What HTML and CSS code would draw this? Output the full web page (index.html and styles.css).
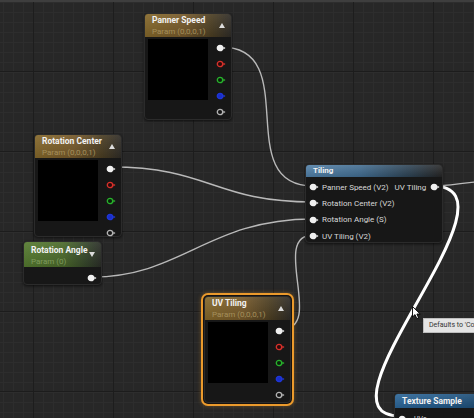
FILE: index.html
```html
<!DOCTYPE html>
<html lang="en">
<head>
  <meta charset="UTF-8">
  <meta name="viewport" content="width=device-width, initial-scale=1.0">
  <link rel="stylesheet" href="styles.css">
  <title>Material Graph</title>
</head>
<body>
  <div class="graph">
    <!-- wires sit under the nodes -->
    <svg class="wires" width="474" height="418" viewBox="0 0 474 418">
      <path class="wire" d="M221,47 C304,47 230,186 313,186" />
      <path class="wire" d="M111,167 C210,167 214,202 313,202" />
      <path class="wire" d="M92,277 C182,277 208,219 313,219" />
      <path class="wire" d="M282,329 C325,329 270,235 313,235" />
      <path class="wire" d="M432,186 C450,186 460,183 476,182" />
      <path class="wire active" d="M432,186 C532,186 305,416 400,416" />
    </svg>

    <div class="node param panner">
      <div class="node-head gold">
        <div class="titles">
          <div class="title">Panner Speed</div>
          <div class="sub">Param (0,0,0,1)</div>
        </div>
        <span class="tri-up"></span>
      </div>
      <div class="param-body">
        <div class="preview"></div>
        <div class="pins">
          <svg class="pin pin-w" width="10" height="8"><circle cx="4" cy="4" r="2.7"/><polygon points="7.3,2.4 9.5,4 7.3,5.6"/></svg>
          <svg class="pin pin-r" width="10" height="8"><circle cx="4" cy="4" r="2.7"/><polygon points="7.3,2.4 9.5,4 7.3,5.6"/></svg>
          <svg class="pin pin-g" width="10" height="8"><circle cx="4" cy="4" r="2.7"/><polygon points="7.3,2.4 9.5,4 7.3,5.6"/></svg>
          <svg class="pin pin-b" width="10" height="8"><circle cx="4" cy="4" r="2.7"/><polygon points="7.3,2.4 9.5,4 7.3,5.6"/></svg>
          <svg class="pin pin-a" width="10" height="8"><circle cx="4" cy="4" r="2.7"/><polygon points="7.3,2.4 9.5,4 7.3,5.6"/></svg>
        </div>
      </div>
    </div>

    <div class="node param rot-center">
      <div class="node-head gold">
        <div class="titles">
          <div class="title">Rotation Center</div>
          <div class="sub">Param (0,0,0,1)</div>
        </div>
        <span class="tri-up"></span>
      </div>
      <div class="param-body">
        <div class="preview"></div>
        <div class="pins">
          <svg class="pin pin-w" width="10" height="8"><circle cx="4" cy="4" r="2.7"/><polygon points="7.3,2.4 9.5,4 7.3,5.6"/></svg>
          <svg class="pin pin-r" width="10" height="8"><circle cx="4" cy="4" r="2.7"/><polygon points="7.3,2.4 9.5,4 7.3,5.6"/></svg>
          <svg class="pin pin-g" width="10" height="8"><circle cx="4" cy="4" r="2.7"/><polygon points="7.3,2.4 9.5,4 7.3,5.6"/></svg>
          <svg class="pin pin-b" width="10" height="8"><circle cx="4" cy="4" r="2.7"/><polygon points="7.3,2.4 9.5,4 7.3,5.6"/></svg>
          <svg class="pin pin-a" width="10" height="8"><circle cx="4" cy="4" r="2.7"/><polygon points="7.3,2.4 9.5,4 7.3,5.6"/></svg>
        </div>
      </div>
    </div>

    <div class="node rot-angle">
      <div class="node-head green">
        <div class="titles">
          <div class="title">Rotation Angle</div>
          <div class="sub">Param (0)</div>
        </div>
        <span class="tri-down"></span>
      </div>
      <div class="angle-body">
        <svg class="pin pin-w" width="10" height="8"><circle cx="4" cy="4" r="2.7"/><polygon points="7.3,2.4 9.5,4 7.3,5.6"/></svg>
      </div>
    </div>

    <div class="node tiling">
      <div class="tiling-head">Tiling</div>
      <div class="tiling-body">
        <div class="inputs">
          <div class="row"><svg class="pin pin-w" width="10" height="8"><circle cx="4" cy="4" r="2.7"/><polygon points="7.3,2.4 9.5,4 7.3,5.6"/></svg><span>Panner Speed (V2)</span></div>
          <div class="row"><svg class="pin pin-w" width="10" height="8"><circle cx="4" cy="4" r="2.7"/><polygon points="7.3,2.4 9.5,4 7.3,5.6"/></svg><span>Rotation Center (V2)</span></div>
          <div class="row"><svg class="pin pin-w" width="10" height="8"><circle cx="4" cy="4" r="2.7"/><polygon points="7.3,2.4 9.5,4 7.3,5.6"/></svg><span>Rotation Angle (S)</span></div>
          <div class="row"><svg class="pin pin-w" width="10" height="8"><circle cx="4" cy="4" r="2.7"/><polygon points="7.3,2.4 9.5,4 7.3,5.6"/></svg><span>UV Tiling (V2)</span></div>
        </div>
        <div class="outputs">
          <div class="row"><span>UV Tiling</span><svg class="pin pin-w" width="10" height="8"><circle cx="4" cy="4" r="2.7"/><polygon points="7.3,2.4 9.5,4 7.3,5.6"/></svg></div>
        </div>
      </div>
    </div>

    <div class="node param uv-tiling selected">
      <div class="node-head gold">
        <div class="titles">
          <div class="title">UV Tiling</div>
          <div class="sub">Param (0,0,0,1)</div>
        </div>
        <span class="tri-up"></span>
      </div>
      <div class="param-body">
        <div class="preview"></div>
        <div class="pins">
          <svg class="pin pin-w" width="10" height="8"><circle cx="4" cy="4" r="2.7"/><polygon points="7.3,2.4 9.5,4 7.3,5.6"/></svg>
          <svg class="pin pin-r" width="10" height="8"><circle cx="4" cy="4" r="2.7"/><polygon points="7.3,2.4 9.5,4 7.3,5.6"/></svg>
          <svg class="pin pin-g" width="10" height="8"><circle cx="4" cy="4" r="2.7"/><polygon points="7.3,2.4 9.5,4 7.3,5.6"/></svg>
          <svg class="pin pin-b" width="10" height="8"><circle cx="4" cy="4" r="2.7"/><polygon points="7.3,2.4 9.5,4 7.3,5.6"/></svg>
          <svg class="pin pin-a" width="10" height="8"><circle cx="4" cy="4" r="2.7"/><polygon points="7.3,2.4 9.5,4 7.3,5.6"/></svg>
        </div>
      </div>
    </div>

    <div class="node texture">
      <div class="texture-head">
        <span>Texture Sample</span>
        <span class="tri-up"></span>
      </div>
      <div class="texture-body">
        <div class="row"><svg class="pin pin-w" width="10" height="8"><circle cx="4" cy="4" r="2.7"/><polygon points="7.3,2.4 9.5,4 7.3,5.6"/></svg><span>UVs</span></div>
      </div>
    </div>

    <div class="tooltip">Defaults to 'Coordinates'</div>

    <svg class="cursor" width="10" height="14" viewBox="0 0 10 14">
      <path d="M0.5,0.5 L0.5,11 L3,8.6 L4.8,12.6 L6.6,11.8 L4.9,8 L8.2,8 Z" />
    </svg>
  </div>
</body>
</html>
```

FILE: styles.css
```css
/* Reset */
html, body {
  margin: 0;
  padding: 0;
  overflow: hidden;
  background: #262626;
}

body {
  font-family: Roboto, "Liberation Sans", sans-serif;
}

/* Canvas with grid */
.graph {
  position: relative;
  width: 474px;
  height: 418px;
  overflow: hidden;
  background-color: #272727;
  background-image:
    linear-gradient(#1c1c1c 1px, transparent 1px),
    linear-gradient(90deg, #1d1d1d 1px, transparent 1px),
    linear-gradient(#2d2d2d 1px, transparent 1px),
    linear-gradient(90deg, #2d2d2d 1px, transparent 1px);
  background-size: 80px 80px, 80px 80px, 10px 10px, 10px 10px;
  background-position: 0 71px, 33px 0, 0 2px, 3px 0;
  box-shadow: inset 0 2px 0 #3e3e3e;
}

.wires {
  position: absolute;
  left: 0;
  top: 0;
}

.wire {
  fill: none;
  stroke: #b9b9b9;
  stroke-width: 1.4;
}

.wire.active {
  stroke: #ffffff;
  stroke-width: 3;
}

/* Nodes */
.node {
  position: absolute;
  box-sizing: border-box;
  background: #171717;
  border: 1px solid #2b2b2b;
  border-radius: 4px;
  box-shadow: 0 1px 3px rgba(0, 0, 0, 0.6);
}

.param {
  width: 88px;
  height: 107px;
}

.panner { left: 144px; top: 13px; }
.rot-center { left: 34px; top: 134px; height: 103px; }
.uv-tiling { left: 204px; top: 296px; width: 87px; }
.rot-angle { left: 23px; top: 241px; width: 79px; height: 44px; }
.tiling { left: 305px; top: 164px; width: 138px; height: 79px; }
.texture { left: 394px; top: 393px; width: 100px; height: 40px; }

.selected {
  box-shadow: 0 0 0 1px #171310, 0 0 0 3px #eb9a2c, 0 0 4px 3px rgba(235, 154, 44, 0.35);
}

.node-head {
  height: 23px;
  display: flex;
  justify-content: space-between;
  align-items: flex-start;
  box-sizing: border-box;
  padding: 1px 6px 0 7px;
  border-radius: 3px 3px 0 0;
}

.gold {
  background:
    linear-gradient(rgba(255, 255, 255, 0.08), rgba(0, 0, 0, 0.12)),
    linear-gradient(90deg, #85682a 0%, #76592a 45%, #4a3d22 78%, #2f2c27 100%);
}

.green {
  height: 25px;
  padding-top: 3px;
  background:
    linear-gradient(rgba(255, 255, 255, 0.08), rgba(0, 0, 0, 0.12)),
    linear-gradient(90deg, #557a2f 0%, #4b6a2a 50%, #34442a 82%, #2a2d27 100%);
}

.title {
  font-size: 8.5px;
  font-weight: 700;
  color: #f2f2f2;
  line-height: 11px;
  white-space: nowrap;
}

.sub {
  font-size: 8px;
  color: #a48f5c;
  line-height: 11px;
  white-space: nowrap;
}

.green .sub {
  color: #7f9a5e;
}

.tri-up {
  width: 0;
  height: 0;
  margin-top: 8px;
  border-left: 3.5px solid transparent;
  border-right: 3.5px solid transparent;
  border-bottom: 5px solid #dcdcdc;
}

.tri-down {
  width: 0;
  height: 0;
  margin-top: 7px;
  border-left: 3.5px solid transparent;
  border-right: 3.5px solid transparent;
  border-top: 5px solid #dcdcdc;
}

.param-body {
  display: flex;
  padding: 2px 5px 0 3px;
}

.preview {
  width: 60px;
  height: 61px;
  background: #000;
}

.pins {
  display: flex;
  flex-direction: column;
  gap: 8px;
  margin-left: auto;
  padding-top: 5px;
}

.angle-body {
  display: flex;
  justify-content: flex-end;
  padding: 7px 4px 0 0;
}

/* Pins */
.pin {
  display: block;
  overflow: visible;
}

.pin circle {
  stroke-width: 1.3;
}

.pin-w circle { fill: #f0f0f0; stroke: #f0f0f0; }
.pin-w polygon { fill: #f0f0f0; }
.pin-r circle { fill: #2a0a0a; stroke: #d8312b; }
.pin-r polygon { fill: #d8312b; }
.pin-g circle { fill: #0b200b; stroke: #28b22c; }
.pin-g polygon { fill: #28b22c; }
.pin-b circle { fill: #1a2fc8; stroke: #1f36d8; }
.pin-b polygon { fill: #1f36d8; }
.pin-a circle { fill: #141414; stroke: #b4b4b4; }
.pin-a polygon { fill: #b4b4b4; }

/* Tiling function node */
.tiling-head {
  height: 12px;
  box-sizing: border-box;
  padding: 1px 0 0 7px;
  font-size: 8px;
  font-weight: 700;
  line-height: 10px;
  color: #f2f2f2;
  border-radius: 3px 3px 0 0;
  background:
    linear-gradient(rgba(255, 255, 255, 0.12), rgba(0, 0, 0, 0.1)),
    linear-gradient(90deg, #4f7ea6 0%, #3f6a8e 40%, #2b4153 75%, #232323 100%);
}

.tiling-body {
  display: flex;
  justify-content: space-between;
  padding-top: 2px;
}

.inputs {
  padding-left: 3px;
}

.row {
  display: flex;
  align-items: center;
  height: 16.3px;
  font-size: 8px;
  color: #d8d8d8;
  white-space: nowrap;
}

.inputs .row .pin {
  margin-right: 3px;
}

.outputs {
  padding-right: 5px;
}

.outputs .row span {
  margin-right: 4px;
}

/* Texture sample, cut off at the edge */
.texture-head {
  height: 14px;
  display: flex;
  justify-content: space-between;
  align-items: center;
  box-sizing: border-box;
  padding: 0 6px 0 7px;
  font-size: 8.5px;
  font-weight: 700;
  color: #f2f2f2;
  border-radius: 3px 3px 0 0;
  background:
    linear-gradient(rgba(255, 255, 255, 0.1), rgba(0, 0, 0, 0.1)),
    linear-gradient(90deg, #2a6496 0%, #1f5583 60%, #1b4466 100%);
}

.texture-head .tri-up {
  margin-top: 0;
}

.texture-body {
  padding: 3px 0 0 3px;
}

.texture-body .row span {
  margin-left: 6px;
  font-size: 7px;
}

/* Tooltip and mouse */
.tooltip {
  position: absolute;
  left: 423px;
  top: 318px;
  height: 15px;
  padding: 0 5px;
  box-sizing: border-box;
  background: #e4e4e4;
  border: 1px solid #bdbdbd;
  font-size: 7px;
  line-height: 13px;
  color: #333;
  white-space: nowrap;
}

.cursor {
  position: absolute;
  left: 412px;
  top: 306px;
}

.cursor path {
  fill: #fff;
  stroke: #000;
  stroke-width: 0.9;
}
```
